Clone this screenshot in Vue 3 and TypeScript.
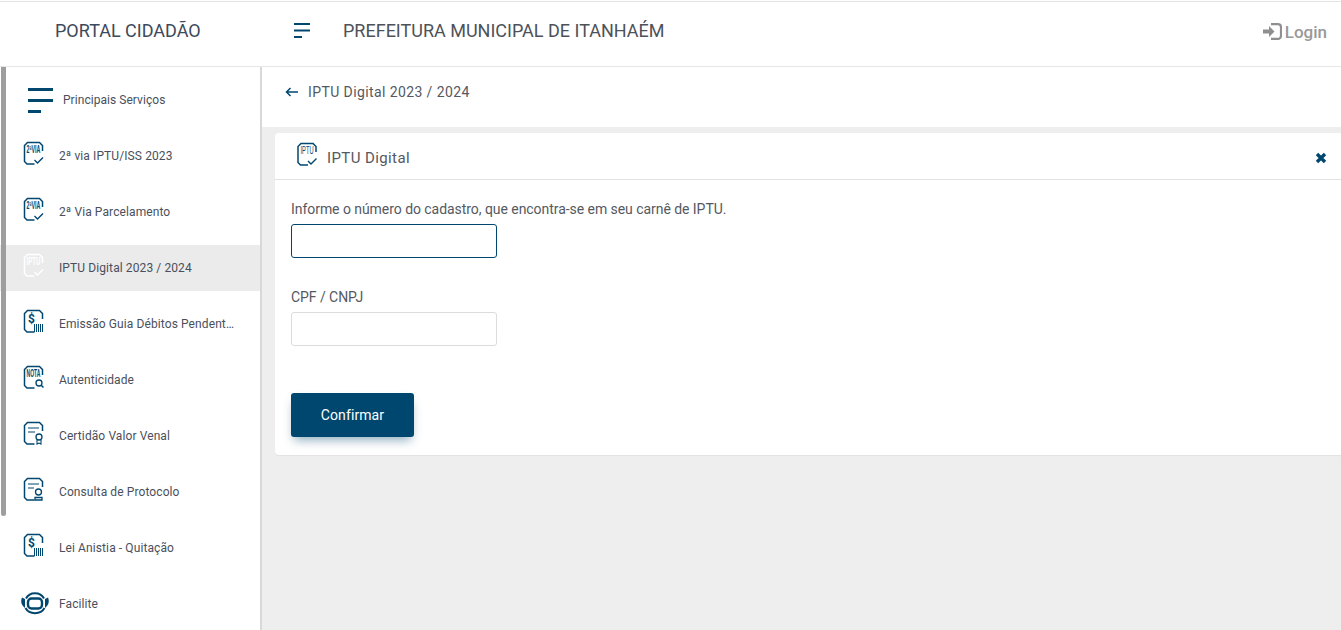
<script setup lang="ts">
import { ref } from 'vue'

type Kind = 'via' | 'iptu' | 'money' | 'nota' | 'cert' | 'proto' | 'face'

interface Item {
  label: string
  kind: Kind
  active?: boolean
}

const items: Item[] = [
  { label: '2ª via IPTU/ISS 2023', kind: 'via' },
  { label: '2ª Via Parcelamento', kind: 'via' },
  { label: 'IPTU Digital 2023 / 2024', kind: 'iptu', active: true },
  { label: 'Emissão Guia Débitos Pendentes', kind: 'money' },
  { label: 'Autenticidade', kind: 'nota' },
  { label: 'Certidão Valor Venal', kind: 'cert' },
  { label: 'Consulta de Protocolo', kind: 'proto' },
  { label: 'Lei Anistia - Quitação', kind: 'money' },
  { label: 'Facilite', kind: 'face' },
]

const cadastro = ref('')
const documento = ref('')
const smallText: Partial<Record<Kind, string>> = { via: '2ªVIA', iptu: 'IPTU', nota: 'NOTA' }
</script>

<template>
  <div class="page">
    <header class="topbar">
      <div class="brand">PORTAL CIDADÃO</div>
      <svg class="menu-icon" width="16" height="15" viewBox="0 0 16 15">
        <path d="M0 1h16M0 7.500h16M0 14h8" stroke="#00476f" stroke-width="2" fill="none" />
      </svg>
      <div class="city">PREFEITURA MUNICIPAL DE ITANHAÉM</div>
      <a class="login">
        <svg width="19" height="17" viewBox="0 0 19 17">
          <path d="M0 6.500h6V3l5.500 5.500L6 14v-3.500H0z" fill="#8f8f8f" />
          <path d="M8 1.200h7a3 3 0 0 1 3 3v8.600a3 3 0 0 1-3 3H8" fill="none" stroke="#8f8f8f" stroke-width="2.200" />
        </svg>
        Login
      </a>
    </header>

    <div class="body">
      <aside class="sidebar">
        <div class="thumb"></div>
        <div class="side-title">
          <svg width="26" height="25" viewBox="0 0 26 25">
            <path d="M0 1.500h25M0 12.500h25M0 23.500h13" stroke="#00476f" stroke-width="3" fill="none" />
          </svg>
          <span>Principais Serviços</span>
        </div>
        <nav class="nav">
          <a v-for="item in items" :key="item.label" class="nav-item" :class="{ active: item.active }">
            <svg v-if="item.kind === 'face'" class="icon face" width="28" height="24" viewBox="0 0 28 24">
              <path d="M5 7.500a10 9.500 0 0 1 18 0M4.500 17a10.500 9 0 0 0 19 0" fill="none" stroke="#00476f" stroke-width="2" />
              <rect x="7" y="7.500" width="14" height="10" rx="3.500" fill="none" stroke="#00476f" stroke-width="2.400" />
              <path d="M1 6.500c-1.500 3.500-1 7.500 3 10.500V8zM27 6.500c1.500 3.500 1 7.500-3 10.500V8z" fill="#00476f" />
            </svg>
            <svg v-else class="icon" width="20" height="23" viewBox="0 0 20 23">
              <path d="M18.500 9V3.500l-3-3H3.500l-3 3v16l2.500 2.500h7.500" fill="none" stroke="currentColor" stroke-width="1.500" />
              <text v-if="smallText[item.kind]" x="2.500" y="10.500" class="tiny" textLength="14" lengthAdjust="spacingAndGlyphs">{{ smallText[item.kind] }}</text>
              <path v-if="item.kind === 'via' || item.kind === 'iptu'" d="M10.500 18l3 3 5.500-5.500" fill="none" stroke="currentColor" stroke-width="1.400" />
              <template v-if="item.kind === 'money'">
                <text x="7.500" y="13" class="dollar" text-anchor="middle">$</text>
                <path d="M10.500 14v8M12.500 14v8M14.500 14v8M16.500 14v8M18.500 14v8" stroke="currentColor" stroke-width="1" fill="none" />
              </template>
              <template v-if="item.kind === 'nota'">
                <circle cx="15" cy="17" r="3" fill="none" stroke="currentColor" stroke-width="1.300" />
                <path d="M17 19l2.500 2.500" stroke="currentColor" stroke-width="1.500" />
              </template>
              <template v-if="item.kind === 'cert'">
                <path d="M4 6h11M4 10h7" stroke="currentColor" stroke-width="1.200" fill="none" />
                <circle cx="15" cy="15" r="3" fill="none" stroke="currentColor" stroke-width="1.300" />
                <path d="M13 18v4l2-1 2 1v-4" fill="none" stroke="currentColor" stroke-width="1.100" />
              </template>
              <template v-if="item.kind === 'proto'">
                <path d="M4 6h11M4 10h6" stroke="currentColor" stroke-width="1.200" fill="none" />
                <circle cx="14.500" cy="14" r="3" fill="none" stroke="currentColor" stroke-width="1.300" />
                <path d="M11 22v-2.500h7V22z" fill="none" stroke="currentColor" stroke-width="1.300" />
              </template>
            </svg>
            <span class="nav-label">{{ item.label }}</span>
          </a>
        </nav>
      </aside>

      <main class="main">
        <div class="crumb">
          <svg width="13" height="10" viewBox="0 0 13 10">
            <path d="M13 5H1.500M5.500 1L1.500 5l4 4" fill="none" stroke="#00476f" stroke-width="1.500" />
          </svg>
          <span>IPTU Digital 2023 / 2024</span>
        </div>
        <section class="card">
          <div class="card-head">
            <svg class="head-icon" width="21" height="23" viewBox="0 0 20 23">
              <path d="M18.500 9V3.500l-3-3H3.500l-3 3v16l2.500 2.500h7.500" fill="none" stroke="#00476f" stroke-width="1.500" />
              <text x="3" y="10.500" class="tiny head-tiny" textLength="13" lengthAdjust="spacingAndGlyphs">IPTU</text>
              <path d="M10.500 18l3 3 5.500-5.500" fill="none" stroke="#00476f" stroke-width="1.400" />
            </svg>
            <h2>IPTU Digital</h2>
            <svg class="close" width="12" height="12" viewBox="0 0 12 12">
              <path d="M2 2l8 8M10 2l-8 8" stroke="#00476f" stroke-width="3.400" fill="none" />
            </svg>
          </div>
          <form class="form" @submit.prevent>
            <label class="field">
              <span>Informe o número do cadastro, que encontra-se em seu carnê de IPTU.</span>
              <input v-model="cadastro" class="focused" type="text" />
            </label>
            <label class="field second">
              <span>CPF / CNPJ</span>
              <input v-model="documento" type="text" />
            </label>
            <button class="confirm" type="submit">Confirmar</button>
          </form>
        </section>
      </main>
    </div>
  </div>
</template>

<style scoped>
.page {
  height: 630px;
  display: flex;
  flex-direction: column;
  overflow: hidden;
  padding-top: 1px;
  box-sizing: border-box;
  font-family: Roboto, "Liberation Sans", sans-serif;
  background: #fff;
  color: #4a4f57;
}

.topbar {
  height: 66px;
  box-sizing: border-box;
  flex: none;
  display: flex;
  align-items: center;
  border-top: 1px solid #e4e4e4;
  border-bottom: 1px solid #e6e6e6;
  padding-bottom: 8px;
}

.brand {
  width: 294px;
  padding-left: 55px;
  box-sizing: border-box;
  font-size: 18px;
  color: #3d4a5c;
}

.menu-icon {
  margin-right: 33px;
}

.city {
  font-size: 18px;
  color: #4d5258;
}

.login {
  margin-left: auto;
  margin-right: 14px;
  margin-top: 3px;
  display: flex;
  align-items: center;
  gap: 3px;
  font-size: 17px;
  font-weight: 500;
  color: #999;
}

.body {
  flex: 1;
  display: flex;
  min-height: 0;
}

.sidebar {
  position: relative;
  width: 262px;
  flex: none;
  box-sizing: border-box;
  border-right: 2px solid #d8d8d8;
  overflow: hidden;
}

.thumb {
  position: absolute;
  left: 1px;
  top: 0;
  width: 5px;
  height: 449px;
  background: #999;
  border-radius: 0 0 3px 3px;
  opacity: 0.95;
}

.side-title {
  height: 52px;
  margin-top: 7px;
  display: flex;
  align-items: center;
  padding-left: 28px;
  gap: 9px;
  font-size: 12px;
  letter-spacing: 0.05px;
  color: #4a4f5c;
}

.nav {
  display: flex;
  flex-direction: column;
  gap: 10px;
  margin-top: 7px;
}

.nav-item {
  height: 46px;
  flex: none;
  display: flex;
  align-items: center;
  padding-left: 24px;
  font-size: 12px;
  letter-spacing: 0.1px;
  color: #4a4f5c;
}

.nav-item.active {
  background: #ebebeb;
}

.icon {
  flex: none;
  overflow: visible;
  color: #00476f;
  margin-top: -5px;
  margin-right: 15px;
}

.icon.face {
  margin-left: -3px;
  margin-right: 10px;
  margin-top: -2px;
}

.active .icon {
  color: #fff;
}

.tiny {
  font-family: "Liberation Sans", sans-serif;
  font-size: 10px;
  font-weight: 700;
  fill: currentColor;
}

.head-tiny {
  fill: #00476f;
  font-weight: 400;
}

.dollar {
  font-family: Roboto, sans-serif;
  font-size: 12px;
  font-weight: 700;
  fill: currentColor;
}

.nav-label {
  width: 176px;
  white-space: nowrap;
  overflow: hidden;
  text-overflow: ellipsis;
}

.main {
  flex: 1;
  min-width: 0;
  background: #eeeeee;
  display: flex;
  flex-direction: column;
}

.crumb {
  height: 60px;
  flex: none;
  background: #fff;
  display: flex;
  align-items: center;
  gap: 10px;
  padding: 0 0 10px 23px;
  box-sizing: border-box;
  font-size: 14px;
  color: #55595f;
  letter-spacing: 0.4px;
}

.card {
  margin: 6px 0 0 13px;
  background: #fff;
  border-radius: 4px 0 0 4px;
  box-shadow: 0 1px 1px rgba(0, 0, 0, 0.05);
}

.card-head {
  height: 47px;
  box-sizing: border-box;
  display: flex;
  align-items: center;
  padding: 0 14px 0 22px;
  border-bottom: 1px solid #e2e2e2;
}

.head-icon {
  overflow: visible;
  margin-top: -4px;
}

.card-head h2 {
  margin: 3px 0 0 9px;
  font-size: 15px;
  font-weight: 400;
  color: #55595f;
  letter-spacing: 0.4px;
}

.close {
  margin-left: auto;
  margin-top: 4px;
}

.form {
  padding: 21px 16px 18px;
  display: flex;
  flex-direction: column;
  align-items: flex-start;
}

.field {
  display: flex;
  flex-direction: column;
  gap: 7px;
  font-size: 14px;
  line-height: 16px;
  letter-spacing: -0.05px;
  color: #55595f;
}

.field.second {
  margin-top: 31px;
}

.field input {
  width: 206px;
  height: 34px;
  box-sizing: border-box;
  border: 1px solid #dcdcdc;
  border-radius: 3px;
  outline: none;
  background: #fff;
}

.field input.focused {
  border-color: #00476f;
}

.confirm {
  margin-top: 47px;
  width: 123px;
  height: 44px;
  border: none;
  border-radius: 3px;
  background: #00476f;
  color: #fff;
  font-family: inherit;
  font-size: 14px;
  letter-spacing: 0.1px;
  box-shadow: 0 6px 10px -3px rgba(0, 71, 111, 0.45);
}
</style>

<style>
body {
  background: #fff;
}
</style>
